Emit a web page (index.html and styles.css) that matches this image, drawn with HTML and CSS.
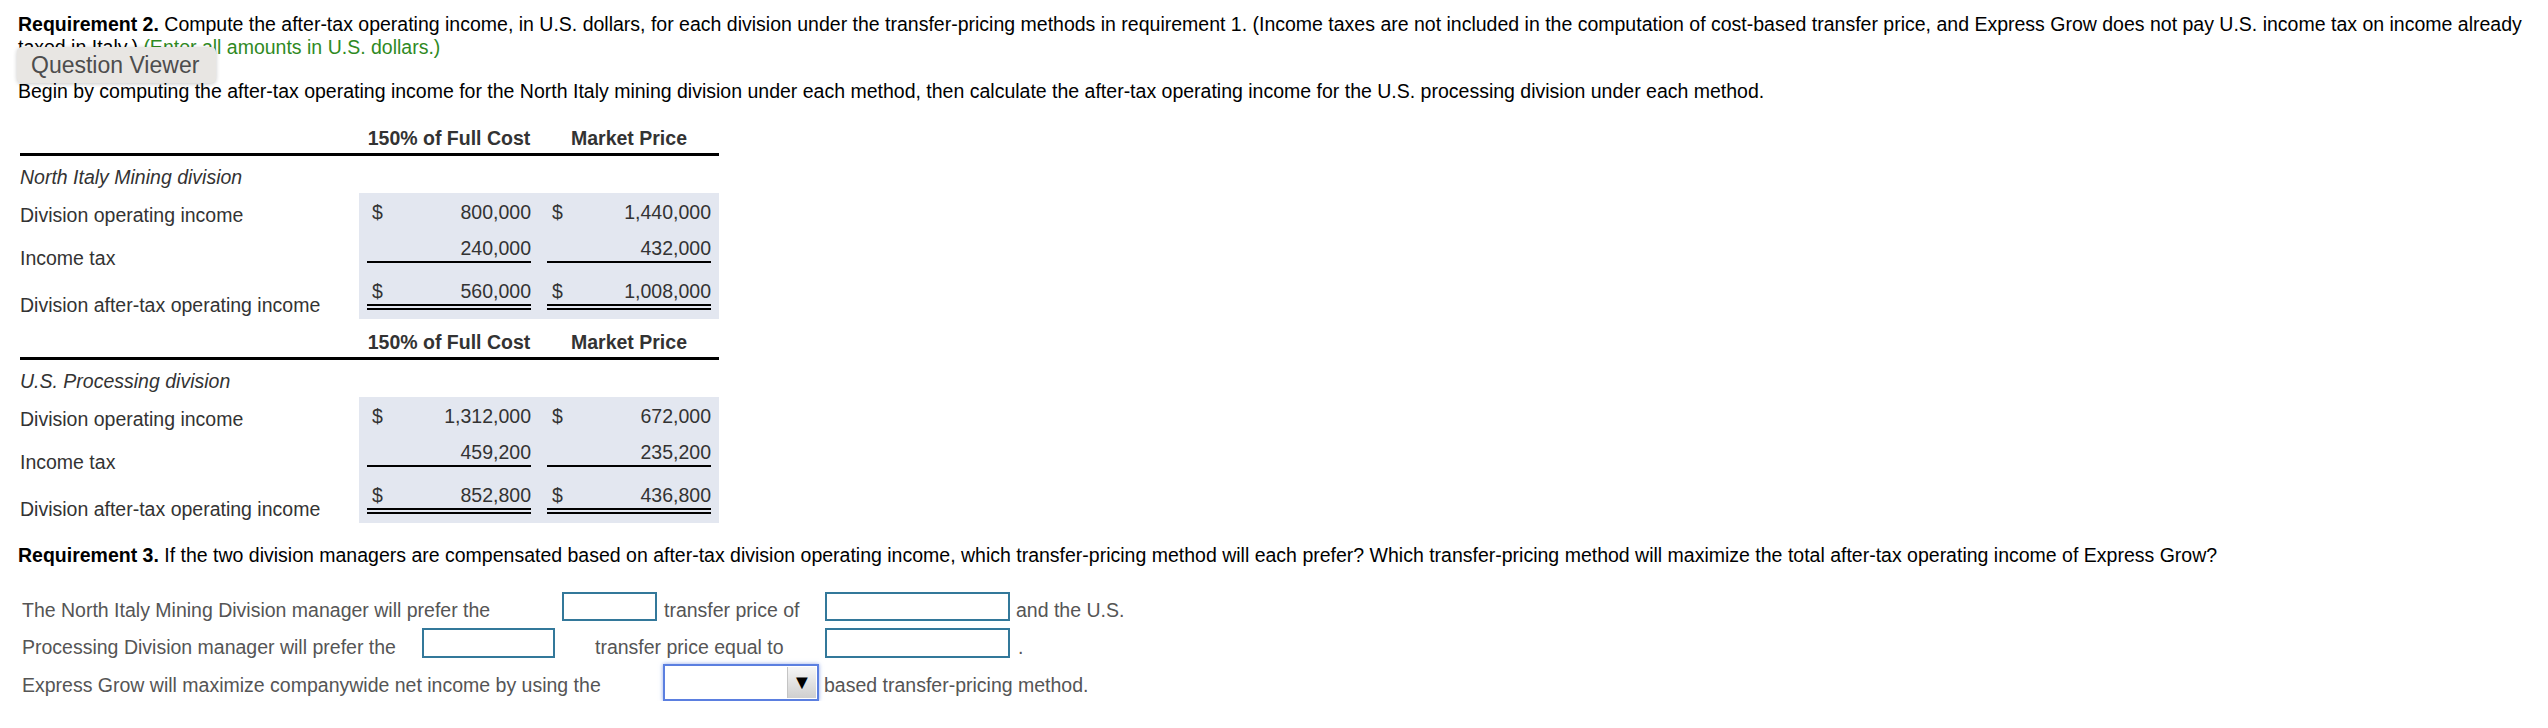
FILE: index.html
```html
<!DOCTYPE html>
<html>
<head>
<meta charset="utf-8">
<link rel="stylesheet" href="styles.css">
</head>
<body>
<p class="intro"><b>Requirement 2.</b> Compute the after-tax operating income, in U.S. dollars, for each division under the transfer-pricing methods in requirement 1. (Income taxes are not included in the computation of cost-based transfer price, and Express Grow does not pay U.S. income tax on income already<br>taxed in Italy.) <span class="green">(Enter all amounts in U.S. dollars.)</span></p>
<div class="viewer">Question Viewer</div>
<p class="begin">Begin by computing the after-tax operating income for the North Italy mining division under each method, then calculate the after-tax operating income for the U.S. processing division under each method.</p>

<div class="tbl first">
  <div class="hcell"></div><div class="hcell">150% of Full Cost</div><div class="hcell">Market Price</div>
  <div class="sec">North Italy Mining division</div>
  <div class="lbl r1">Division operating income</div>
  <div class="val r1"><div class="amt"><span>$</span><span>800,000</span></div></div>
  <div class="val r1"><div class="amt"><span>$</span><span>1,440,000</span></div></div>
  <div class="lbl r2">Income tax</div>
  <div class="val r2"><div class="amt ul"><span></span><span>240,000</span></div></div>
  <div class="val r2"><div class="amt ul"><span></span><span>432,000</span></div></div>
  <div class="lbl r3">Division after-tax operating income</div>
  <div class="val r3"><div class="amt dul"><span>$</span><span>560,000</span></div></div>
  <div class="val r3"><div class="amt dul"><span>$</span><span>1,008,000</span></div></div>
</div>

<div class="tbl second">
  <div class="hcell"></div><div class="hcell">150% of Full Cost</div><div class="hcell">Market Price</div>
  <div class="sec">U.S. Processing division</div>
  <div class="lbl r1">Division operating income</div>
  <div class="val r1"><div class="amt"><span>$</span><span>1,312,000</span></div></div>
  <div class="val r1"><div class="amt"><span>$</span><span>672,000</span></div></div>
  <div class="lbl r2">Income tax</div>
  <div class="val r2"><div class="amt ul"><span></span><span>459,200</span></div></div>
  <div class="val r2"><div class="amt ul"><span></span><span>235,200</span></div></div>
  <div class="lbl r3">Division after-tax operating income</div>
  <div class="val r3"><div class="amt dul"><span>$</span><span>852,800</span></div></div>
  <div class="val r3"><div class="amt dul"><span>$</span><span>436,800</span></div></div>
</div>

<p class="req3"><b>Requirement 3.</b> If the two division managers are compensated based on after-tax division operating income, which transfer-pricing method will each prefer? Which transfer-pricing method will maximize the total after-tax operating income of Express Grow?</p>

<div class="row row1">
  <span class="t t1a">The North Italy Mining Division manager will prefer the</span>
  <div class="box b-sm"></div>
  <span class="t t1b">transfer price of</span>
  <div class="box b-lg"></div>
  <span class="t t1c">and the U.S.</span>
</div>
<div class="row row2">
  <span class="t t2a">Processing Division manager will prefer the</span>
  <div class="box b-md"></div>
  <span class="t t2b">transfer price equal to</span>
  <div class="box b-lg"></div>
  <span class="t t2c">.</span>
</div>
<div class="row row3">
  <span class="t t3a">Express Grow will maximize companywide net income by using the</span>
  <div class="select"><div class="sel-field"></div><div class="sel-btn">&#9660;</div></div>
  <span class="t t3b">based transfer-pricing method.</span>
</div>
</body>
</html>
```
FILE: styles.css
```css
html, body {
  margin: 0;
  background: #fff;
}
body {
  padding: 13px 0 0 18px;
  font-family: "Liberation Sans", Arial, Helvetica, sans-serif;
  font-size: 19.5px;
  color: #000;
}
p {
  margin: 0;
  line-height: 25px;
}
.intro {
  line-height: 23px;
}
.green {
  color: #2f8a1f;
}
.viewer {
  position: absolute;
  left: 17px;
  top: 47px;
  width: 199px;
  height: 36px;
  box-sizing: border-box;
  padding-left: 14px;
  line-height: 36px;
  font-size: 23px;
  color: #4d4d4d;
  background: #e8e6e3;
  border-radius: 5px;
  box-shadow: 0 1px 4px rgba(0,0,0,0.22);
}
.begin {
  margin-top: 19.5px;
}

.tbl {
  display: grid;
  grid-template-columns: 339px 180px 180px;
  width: 699px;
  margin-left: 2px;
  color: #333;
}
.tbl.first { margin-top: 20.5px; }
.tbl.second { margin-top: 9px; }

.hcell {
  height: 32px;
  box-sizing: border-box;
  line-height: 29px;
  border-bottom: 3px solid #000;
  font-weight: bold;
  text-align: center;
}
.sec {
  grid-column: 1 / 4;
  height: 37px;
  box-sizing: border-box;
  padding-bottom: 3px;
  display: flex;
  align-items: flex-end;
  font-style: italic;
  line-height: 25px;
}
.lbl {
  display: flex;
  align-items: flex-end;
  box-sizing: border-box;
  line-height: 25px;
}
.val {
  background: #e3e7f0;
  box-sizing: border-box;
  padding-left: 8px;
  padding-right: 8px;
}
.r1 { height: 39px; }
.r2 { height: 40px; }
.r3 { height: 47px; }
.lbl.r1 { padding-bottom: 4px; }
.lbl.r2 { padding-bottom: 1px; }
.lbl.r3 { padding-bottom: 1.5px; }
.val.r1 { padding-top: 7px; }
.val.r2 { padding-top: 4px; }
.val.r3 { padding-top: 7px; }

.amt {
  display: flex;
  justify-content: space-between;
  line-height: 25px;
  padding-left: 5px;
}
.amt.ul { border-bottom: 2px solid #000; }
.amt.dul { border-bottom: 6px double #000; }

.req3 {
  margin-top: 20px;
}

.row {
  display: flex;
  align-items: flex-start;
  height: 37px;
  padding-left: 4px;
  color: #555;
}
.row1 { margin-top: 22px; }
.t {
  display: block;
  line-height: 25px;
  white-space: nowrap;
  box-sizing: border-box;
}
.row1 .t, .row2 .t { margin-top: 7.5px; }
.row3 .t { margin-top: 8.5px; }

.t1a { width: 540px; }
.t1b { width: 168px; padding-left: 7px; }
.t1c { padding-left: 6px; }
.t2a { width: 400px; }
.t2b { width: 270px; padding-left: 40px; }
.t2c { padding-left: 8px; }
.t3a { width: 641px; }
.t3b { padding-left: 5px; }

.box {
  box-sizing: border-box;
  border: 2px solid #33789a;
  background: #fff;
}
.row1 .box { height: 29px; margin-top: 2px; }
.row2 .box { height: 30px; margin-top: 1px; }
.b-sm { width: 95px; }
.b-md { width: 133px; }
.b-lg { width: 185px; }

.select {
  width: 156px;
  height: 37px;
  box-sizing: border-box;
  border: 2px solid #5b7fe0;
  box-shadow: 0 0 4px rgba(70, 110, 220, 0.6);
  display: flex;
  background: #fff;
}
.sel-field {
  flex: 1;
}
.sel-btn {
  width: 28px;
  margin: 1px 1px 1px 0;
  background: linear-gradient(#f6f6f6, #cfcfcf);
  border-left: 1px solid #c4c4c4;
  color: #000;
  font-size: 20px;
  line-height: 30px;
  text-align: center;
}
```
